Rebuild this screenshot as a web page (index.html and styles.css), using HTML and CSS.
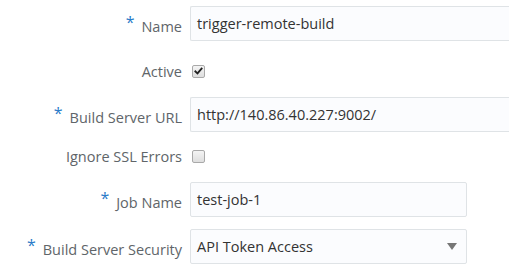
FILE: index.html
```html
<!DOCTYPE html>
<html>
<head>
<meta charset="utf-8">
<link rel="stylesheet" href="styles.css">
</head>
<body>
<form class="form">
  <div class="row field">
    <label class="label"><span class="req">*</span>Name</label>
    <div class="input wide">trigger-remote-build</div>
  </div>
  <div class="row check check-active">
    <label class="label">Active</label>
    <span class="box"><svg width="12" height="12" viewBox="0 0 12 12"><path d="M2.6 6.4 L4.9 8.6 L9.4 3.4" fill="none" stroke="#222" stroke-width="2" stroke-linecap="square"/></svg></span>
  </div>
  <div class="row field">
    <label class="label"><span class="req">*</span>Build Server URL</label>
    <div class="input wide">http://140.86.40.227:9002/</div>
  </div>
  <div class="row check check-ssl">
    <label class="label">Ignore SSL Errors</label>
    <span class="box"></span>
  </div>
  <div class="row field">
    <label class="label"><span class="req">*</span>Job Name</label>
    <div class="input">test-job-1</div>
  </div>
  <div class="row field field-select">
    <label class="label"><span class="req">*</span>Build Server Security</label>
    <div class="input select">API Token Access<span class="arrow"></span></div>
  </div>
</form>
</body>
</html>
```

FILE: styles.css
```css
html, body {
  margin: 0;
  padding: 0;
  overflow: hidden;
  background: #ffffff;
}
body {
  font-family: "Open Sans", "Noto Sans", sans-serif;
  font-size: 14px;
  width: 509px;
  height: 276px;
}
.form {
  padding-top: 6px;
  display: flex;
  flex-direction: column;
}
.row {
  display: grid;
  grid-template-columns: 182px 277px;
  column-gap: 8px;
  align-items: center;
}
.field-select {
  margin-top: 12px;
}
.label {
  text-align: right;
  color: #606569;
  white-space: nowrap;
  font-size: 14.5px;
}
.req {
  color: #2a7bc8;
  font-size: 16px;
  margin-right: 7px;
  vertical-align: 4px;
}
.input {
  box-sizing: border-box;
  height: 35px;
  border: 1px solid #dfe3e6;
  border-radius: 2px;
  background: #fbfcfe;
  color: #333333;
  padding: 0 6px;
  display: flex;
  align-items: center;
  font-size: 14.5px;
  white-space: nowrap;
}
.wide {
  width: 319px;
  border-right: none;
  border-radius: 2px 0 0 2px;
}
.select {
  justify-content: space-between;
  padding-right: 9px;
}
.arrow {
  width: 0;
  height: 0;
  border-left: 5px solid transparent;
  border-right: 5px solid transparent;
  border-top: 7px solid #767676;
}
.check {
  height: 20px;
}
.check-active {
  padding: 20px 0 16px;
}
.check-ssl {
  padding: 14px 0 16px;
}
.box {
  box-sizing: border-box;
  width: 13px;
  height: 13px;
  margin-left: 2px;
  border: 1px solid #a9a9a9;
  border-radius: 2px;
  background: linear-gradient(#f4f4f4, #dedede);
  display: flex;
  align-items: center;
  justify-content: center;
}
.box svg {
  display: block;
}
```
